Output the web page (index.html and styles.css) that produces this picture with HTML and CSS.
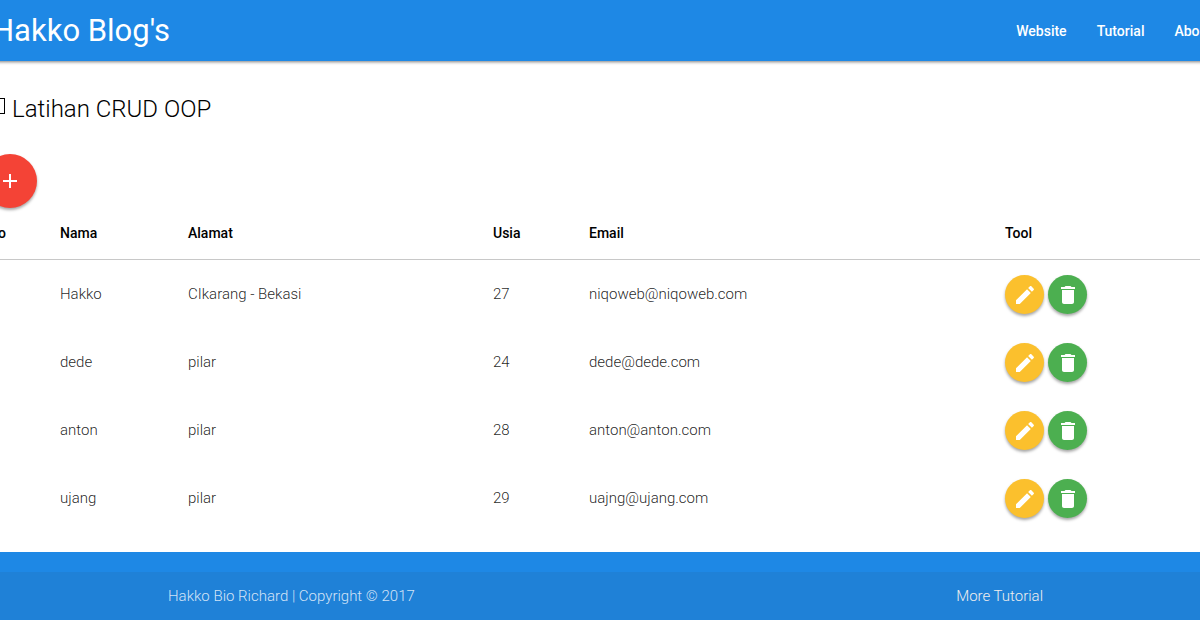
FILE: index.html
```
<!DOCTYPE html>
<html lang="id">
<head>
  <meta charset="UTF-8">
  <meta name="viewport" content="width=device-width, initial-scale=1.0">
  <title>Hakko Blog's</title>
  <link rel="stylesheet" href="styles.css">
</head>
<body>
  <svg class="sprite" aria-hidden="true">
    <symbol id="icon-edit" viewBox="0 0 24 24">
      <path d="M3 17.25V21h3.75L17.81 9.94l-3.75-3.75L3 17.25zM20.71 7.04c.39-.39.39-1.02 0-1.41l-2.34-2.34c-.39-.39-1.02-.39-1.41 0l-1.83 1.83 3.75 3.75 1.83-1.83z"/>
    </symbol>
    <symbol id="icon-delete" viewBox="0 0 24 24">
      <path d="M6 19c0 1.1.9 2 2 2h8c1.1 0 2-.9 2-2V7H6v12zM19 4h-3.5l-1-1h-5l-1 1H5v2h14V4z"/>
    </symbol>
    <symbol id="icon-add" viewBox="0 0 24 24">
      <path d="M19 13h-6v6h-2v-6H5v-2h6V5h2v6h6v2z"/>
    </symbol>
    <symbol id="icon-box" viewBox="0 0 28 28">
      <path d="M4 3h21v16H4V3zm1 1v14h19V4H5z"/>
    </symbol>
  </svg>

  <div class="page">
    <nav class="navbar">
      <a class="brand" href="#">Hakko Blog's</a>
      <ul class="menu">
        <li><a href="#">Website</a></li>
        <li><a href="#">Tutorial</a></li>
        <li><a href="#">About</a></li>
      </ul>
    </nav>

    <main>
      <h1><svg class="title-icon" aria-hidden="true"><use href="#icon-box"/></svg>Latihan CRUD OOP</h1>
      <button class="btn btn-large red" type="button" aria-label="Tambah"><svg><use href="#icon-add"/></svg></button>

      <table>
        <colgroup>
          <col class="col-no">
          <col class="col-nama">
          <col class="col-alamat">
          <col class="col-usia">
          <col class="col-email">
          <col>
        </colgroup>
        <thead>
          <tr><th>No</th><th>Nama</th><th>Alamat</th><th>Usia</th><th>Email</th><th>Tool</th></tr>
        </thead>
        <tbody>
          <tr>
            <td>1</td><td>Hakko</td><td>CIkarang - Bekasi</td><td>27</td><td>niqoweb@niqoweb.com</td>
            <td>
              <div class="tools">
                <button class="btn yellow" type="button" aria-label="Edit"><svg><use href="#icon-edit"/></svg></button>
                <button class="btn green" type="button" aria-label="Hapus"><svg><use href="#icon-delete"/></svg></button>
              </div>
            </td>
          </tr>
          <tr>
            <td>2</td><td>dede</td><td>pilar</td><td>24</td><td>dede@dede.com</td>
            <td>
              <div class="tools">
                <button class="btn yellow" type="button" aria-label="Edit"><svg><use href="#icon-edit"/></svg></button>
                <button class="btn green" type="button" aria-label="Hapus"><svg><use href="#icon-delete"/></svg></button>
              </div>
            </td>
          </tr>
          <tr>
            <td>3</td><td>anton</td><td>pilar</td><td>28</td><td>anton@anton.com</td>
            <td>
              <div class="tools">
                <button class="btn yellow" type="button" aria-label="Edit"><svg><use href="#icon-edit"/></svg></button>
                <button class="btn green" type="button" aria-label="Hapus"><svg><use href="#icon-delete"/></svg></button>
              </div>
            </td>
          </tr>
          <tr>
            <td>4</td><td>ujang</td><td>pilar</td><td>29</td><td>uajng@ujang.com</td>
            <td>
              <div class="tools">
                <button class="btn yellow" type="button" aria-label="Edit"><svg><use href="#icon-edit"/></svg></button>
                <button class="btn green" type="button" aria-label="Hapus"><svg><use href="#icon-delete"/></svg></button>
              </div>
            </td>
          </tr>
        </tbody>
      </table>
    </main>

    <footer>
      <div class="copyright">
        <span>Hakko Bio Richard | Copyright © 2017</span>
        <a href="#">More Tutorial</a>
      </div>
    </footer>
  </div>
</body>
</html>
```

FILE: styles.css
```
* {
  box-sizing: border-box;
}
body {
  margin: 0;
  overflow-x: hidden;
  background: #fff;
  color: rgba(0, 0, 0, 0.87);
  font-family: Roboto, sans-serif;
  font-size: 15px;
  font-weight: 300;
  line-height: 22px;
}
a {
  color: inherit;
  text-decoration: none;
}
.sprite {
  display: none;
}
.page {
  margin: 0 -20px;
}

/* navbar */
.navbar {
  display: flex;
  align-items: center;
  justify-content: space-between;
  height: 61px;
  padding-left: 12px;
  background: #1e88e5;
  color: #fff;
  box-shadow: 0 1px 3px rgba(0, 0, 0, 0.5);
}
.brand {
  font-size: 31px;
  font-weight: 400;
  line-height: 60px;
}
.menu {
  display: flex;
  gap: 30px;
  margin: 0;
  padding: 0 8px 0 0;
  list-style: none;
}
.menu a {
  display: block;
  font-size: 14px;
  font-weight: 500;
  line-height: 60px;
}

/* content */
h1 {
  display: flex;
  align-items: center;
  gap: 4px;
  margin: 0;
  padding: 32px 0 29px;
  font-size: 24px;
  font-weight: 300;
  line-height: 32px;
  color: #000;
}
.title-icon {
  width: 28px;
  height: 28px;
}
.btn {
  display: flex;
  align-items: center;
  justify-content: center;
  width: 39px;
  height: 39px;
  padding: 0;
  border: none;
  border-radius: 50%;
  color: #fff;
  box-shadow: 0 2px 3px rgba(0, 0, 0, 0.35);
  cursor: pointer;
}
.btn svg {
  width: 24px;
  height: 24px;
  fill: currentColor;
}
.btn-large {
  width: 54px;
  height: 54px;
  margin-left: 3px;
}
.red {
  background: #f44336;
}
.yellow {
  background: #fbc02d;
}
.green {
  background: #4caf50;
}

table {
  width: 100%;
  border-collapse: collapse;
  table-layout: fixed;
}
thead {
  border-bottom: 1px solid #c8c8c8;
}
th, td {
  padding: 14px 5px 15px;
  text-align: left;
}
td:last-child {
  padding: 15px 5px 14px;
}
th {
  font-size: 14px;
  font-weight: 500;
  color: #000;
}
th:first-child, td:first-child {
  padding-left: 8px;
}
.col-no {
  width: 75px;
}
.col-nama {
  width: 128px;
}
.col-alamat {
  width: 305px;
}
.col-usia {
  width: 96px;
}
.col-email {
  width: 416px;
}
.tools {
  display: flex;
  gap: 4px;
}

/* footer */
footer {
  margin-top: 20px;
  padding-top: 20px;
  background: #1e88e5;
}
.copyright {
  display: flex;
  align-items: center;
  justify-content: space-between;
  height: 48px;
  padding: 0 177px 0 188px;
  background: rgba(51, 51, 51, 0.08);
  color: rgba(255, 255, 255, 0.8);
}
.copyright a {
  color: #eee;
}
```
